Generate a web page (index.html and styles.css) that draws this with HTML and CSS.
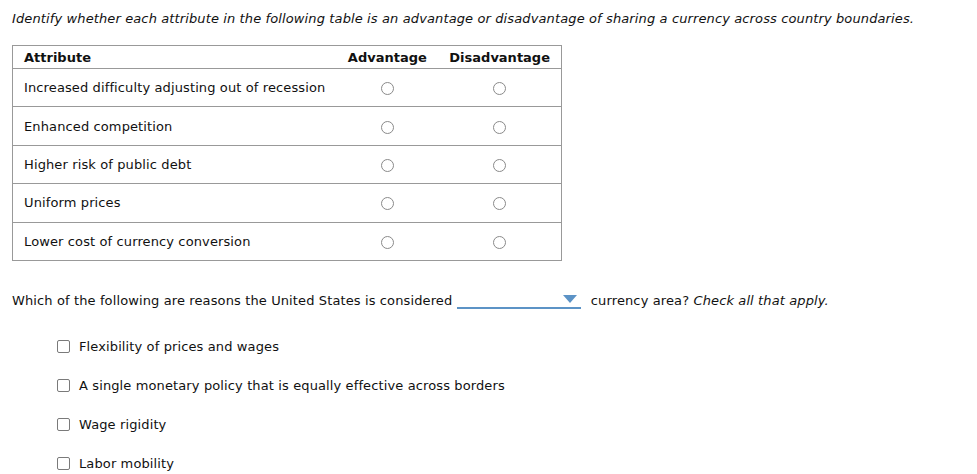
FILE: index.html
```html
<!DOCTYPE html>
<html>
<head>
<meta charset="utf-8">
<link rel="stylesheet" href="styles.css">
</head>
<body>
<p class="instructions">Identify whether each attribute in the following table is an advantage or disadvantage of sharing a currency across country boundaries.</p>
<table class="grid">
  <thead>
    <tr>
      <th class="col-attr">Attribute</th>
      <th class="col-adv">Advantage</th>
      <th class="col-dis">Disadvantage</th>
    </tr>
  </thead>
  <tbody>
    <tr><td>Increased difficulty adjusting out of recession</td><td class="c"><span class="radio"></span></td><td class="c"><span class="radio"></span></td></tr>
    <tr><td>Enhanced competition</td><td class="c"><span class="radio"></span></td><td class="c"><span class="radio"></span></td></tr>
    <tr><td>Higher risk of public debt</td><td class="c"><span class="radio"></span></td><td class="c"><span class="radio"></span></td></tr>
    <tr><td>Uniform prices</td><td class="c"><span class="radio"></span></td><td class="c"><span class="radio"></span></td></tr>
    <tr><td>Lower cost of currency conversion</td><td class="c"><span class="radio"></span></td><td class="c"><span class="radio"></span></td></tr>
  </tbody>
</table>
<p class="question">Which of the following are reasons the United States is considered <span class="dropdown"><span class="arrow"></span></span> currency area? <em>Check all that apply.</em></p>
<ul class="checks">
  <li><span class="box"></span><span>Flexibility of prices and wages</span></li>
  <li><span class="box"></span><span>A single monetary policy that is equally effective across borders</span></li>
  <li><span class="box"></span><span>Wage rigidity</span></li>
  <li><span class="box"></span><span>Labor mobility</span></li>
</ul>
</body>
</html>
```
FILE: styles.css
```css
html, body {
  margin: 0;
  padding: 0;
  background: #fff;
}
body {
  font-family: "DejaVu Sans", Verdana, sans-serif;
  font-size: 13px;
  letter-spacing: 0.12px;
  color: #111;
  padding: 0 12px;
}
.instructions {
  font-style: italic;
  margin: 11px 0 0 0;
  line-height: 16px;
}
.grid {
  margin-top: 18px;
  border-collapse: collapse;
  width: 550px;
  border: 1px solid #999;
}
.grid th {
  font-weight: bold;
  text-align: left;
  height: 22px;
  padding: 0 11px;
  white-space: nowrap;
  letter-spacing: 0;
}
.grid th.col-adv, .grid th.col-dis {
  text-align: center;
}
.grid .col-adv { width: 80px; }
.grid .col-dis { width: 100px; }
.grid td {
  height: 37.4px;
  padding: 0 11px;
  border-top: 1px solid #999;
  white-space: nowrap;
}
.grid td.c {
  text-align: center;
}
.radio {
  display: inline-block;
  width: 11px;
  height: 11px;
  border: 1px solid #8a8a8a;
  border-radius: 50%;
  vertical-align: middle;
}
.question {
  margin: 32px 0 0 0;
  line-height: 16px;
}
.dropdown {
  display: inline-block;
  position: relative;
  width: 124px;
  height: 13px;
  border-bottom: 2px solid #5c93c6;
  margin-right: 6px;
  vertical-align: -4px;
}
.arrow {
  position: absolute;
  right: 4px;
  top: 1px;
  width: 0;
  height: 0;
  border-left: 7px solid transparent;
  border-right: 7px solid transparent;
  border-top: 8px solid #5c93c6;
}
.checks {
  list-style: none;
  margin: 30px 0 0 0;
  padding: 0 0 0 45px;
}
.checks li {
  display: flex;
  align-items: center;
  gap: 9px;
  height: 16px;
  margin-bottom: 23px;
}
.box {
  display: inline-block;
  width: 11px;
  height: 11px;
  border: 1px solid #7a7a7a;
  border-radius: 2px;
}
```
